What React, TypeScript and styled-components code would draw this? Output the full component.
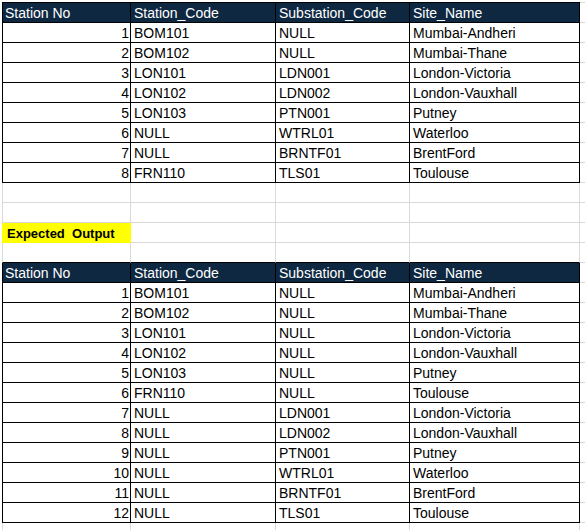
import React from "react";
import styled, { createGlobalStyle, css } from "styled-components";

const GlobalStyle = createGlobalStyle`
  html, body {
    margin: 0;
    padding: 0;
    background: #ffffff;
    overflow: hidden;
  }
  body {
    font-family: "Liberation Sans", Arial, sans-serif;
  }
`;

const GRID = "#d9d9d9";
const LINE = "#000000";
const HEAD_BG = "#0e2841";

type RowKind = "header" | "data" | "blank" | "label";

interface SheetRow {
  kind: RowKind;
  cells: string[];
  aboveTable?: boolean;
}

const Sheet = styled.div`
  padding: 2px 0 0 2px;
  display: grid;
  grid-template-columns: 129px 145px 134px 170px 1fr;
`;

const Cell = styled.div<{
  $kind: RowKind;
  $col: number;
  $first: boolean;
  $aboveTable: boolean;
}>`
  box-sizing: content-box;
  height: 19px;
  line-height: 21px;
  padding: 0 3px;
  font-size: 14px;
  color: #000;
  white-space: pre;
  overflow: hidden;
  border-right: 1px solid ${GRID};
  border-bottom: 1px solid ${({ $aboveTable }) => ($aboveTable ? LINE : GRID)};
  ${({ $col }) =>
    $col === 0 &&
    css`
      border-left: 1px solid ${GRID};
      padding-left: 2px;
    `}
  ${({ $first }) =>
    $first &&
    css`
      border-top: 1px solid ${GRID};
    `}
  ${({ $kind, $col }) =>
    ($kind === "header" || $kind === "data") &&
    $col < 4 &&
    css`
      border-right-color: ${LINE};
      border-bottom-color: ${LINE};
      border-left-color: ${LINE};
      border-top-color: ${LINE};
    `}
  ${({ $kind, $col }) =>
    $kind === "header" &&
    $col < 4 &&
    css`
      background: ${HEAD_BG};
      color: #ffffff;
    `}
  ${({ $kind, $col }) =>
    $kind === "data" &&
    $col === 0 &&
    css`
      text-align: right;
      padding-right: 1px;
    `}
  ${({ $kind, $col }) =>
    $kind === "label" &&
    $col === 0 &&
    css`
      background: #ffff00;
      border-left-color: #ffff00;
      border-right-color: #ffff00;
      border-bottom-color: #ffff00;
      font-weight: 700;
      font-size: 13px;
      padding-left: 4px;
    `}
`;

const headers = ["Station No", "Station_Code", "Substation_Code", "Site_Name"];

const input: string[][] = [
  ["1", "BOM101", "NULL", "Mumbai-Andheri"],
  ["2", "BOM102", "NULL", "Mumbai-Thane"],
  ["3", "LON101", "LDN001", "London-Victoria"],
  ["4", "LON102", "LDN002", "London-Vauxhall"],
  ["5", "LON103", "PTN001", "Putney"],
  ["6", "NULL", "WTRL01", "Waterloo"],
  ["7", "NULL", "BRNTF01", "BrentFord"],
  ["8", "FRN110", "TLS01", "Toulouse"],
];

const output: string[][] = [
  ["1", "BOM101", "NULL", "Mumbai-Andheri"],
  ["2", "BOM102", "NULL", "Mumbai-Thane"],
  ["3", "LON101", "NULL", "London-Victoria"],
  ["4", "LON102", "NULL", "London-Vauxhall"],
  ["5", "LON103", "NULL", "Putney"],
  ["6", "FRN110", "NULL", "Toulouse"],
  ["7", "NULL", "LDN001", "London-Victoria"],
  ["8", "NULL", "LDN002", "London-Vauxhall"],
  ["9", "NULL", "PTN001", "Putney"],
  ["10", "NULL", "WTRL01", "Waterloo"],
  ["11", "NULL", "BRNTF01", "BrentFord"],
  ["12", "NULL", "TLS01", "Toulouse"],
];

const blank: SheetRow = { kind: "blank", cells: ["", "", "", ""] };

const rows: SheetRow[] = [
  { kind: "header", cells: headers },
  ...input.map((cells) => ({ kind: "data" as RowKind, cells })),
  blank,
  blank,
  { kind: "label", cells: ["Expected  Output", "", "", ""] },
  { ...blank, aboveTable: true },
  { kind: "header", cells: headers },
  ...output.map((cells) => ({ kind: "data" as RowKind, cells })),
  blank,
];

const App: React.FC = () => {
  return (
    <>
      <GlobalStyle />
      <Sheet>
        {rows.map((row, r) =>
          [...row.cells, ""].map((text, c) => (
            <Cell
              key={`${r}-${c}`}
              $kind={row.kind}
              $col={c}
              $first={r === 0}
              $aboveTable={!!row.aboveTable && c < 4}
            >
              {text}
            </Cell>
          ))
        )}
      </Sheet>
    </>
  );
};

export default App;
